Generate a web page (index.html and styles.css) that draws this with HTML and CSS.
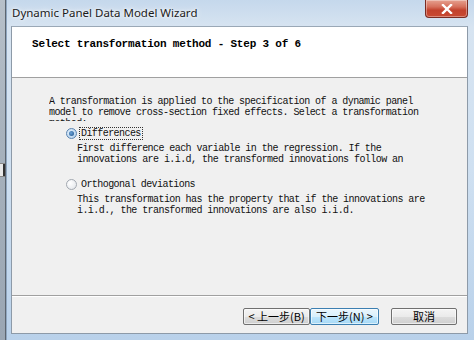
FILE: index.html
```html
<!DOCTYPE html>
<html>
<head>
<meta charset="utf-8">
<link rel="stylesheet" href="styles.css">
</head>
<body>
<div class="screen">
  <div class="behind">
    <div class="behind-frag"></div>
  </div>
  <div class="window">
    <div class="titlebar">
      <span class="title">Dynamic Panel Data Model Wizard</span>
      <div class="close">
        <svg width="12" height="10" viewBox="0 0 12 10"><path d="M2 1 L10 9 M10 1 L2 9" stroke="#fff" stroke-width="2.4" stroke-linecap="square"/></svg>
      </div>
    </div>
    <div class="client">
      <div class="header">Select transformation method - Step 3 of 6</div>
      <div class="content">
        <p class="intro">A transformation is applied to the specification of a dynamic panel<br>model to remove cross-section fixed effects. Select a transformation<br>method:</p>
        <div class="option">
          <div class="radio-row">
            <span class="radio checked"><span class="dot"></span></span>
            <span class="label focused">Differences</span>
          </div>
          <p class="desc">First difference each variable in the regression. If the<br>innovations are i.i.d, the transformed innovations follow an</p>
        </div>
        <div class="option second">
          <div class="radio-row">
            <span class="radio"></span>
            <span class="label">Orthogonal deviations</span>
          </div>
          <p class="desc">This transformation has the property that if the innovations are<br>i.i.d., the transformed innovations are also i.i.d.</p>
        </div>
      </div>
      <div class="footer">
        <div class="btn">&lt; 上一步(B)</div>
        <div class="btn default">下一步(N) &gt;</div>
        <div class="btn cancel">取消</div>
      </div>
    </div>
  </div>
</div>
</body>
</html>
```
FILE: styles.css
```css
html, body {
  margin: 0;
  padding: 0;
  width: 474px;
  height: 340px;
  overflow: hidden;
  background: #c9d3dd;
}
.screen {
  display: flex;
  width: 474px;
  height: 340px;
}
.behind {
  width: 5px;
  background: linear-gradient(#b7c0c9, #a7b2bd 40%, #9aa6b3);
  border-right: 1px solid #5d6670;
  display: flex;
  flex-direction: column;
  justify-content: center;
  overflow: hidden;
}
.behind-frag {
  height: 12px;
  background: #e8e8e8;
  border-top: 1px solid #888;
  border-bottom: 1px solid #888;
  box-shadow: inset -2px 0 0 #333;
}
.window {
  flex: 1;
  display: flex;
  flex-direction: column;
  padding: 0 6px 6px 5px;
  background: linear-gradient(180deg, #c5d8ec 0%, #d7e4f1 8%, #cfe0f1 50%, #b9d1ea 100%);
  box-shadow: inset 1px 0 0 #8fa6bf;
}
.titlebar {
  height: 26px;
  display: flex;
  align-items: flex-start;
  justify-content: space-between;
}
.title {
  font: 11.5px "Noto Sans", "Open Sans", sans-serif;
  color: #1b1b1b;
  margin: 5px 0 0 1px;
  text-shadow: 0 0 6px #fff, 0 0 3px #fff;
}
.close {
  width: 43px;
  height: 18px;
  box-sizing: border-box;
  border: 1px solid #7a2b22;
  border-top: none;
  border-radius: 0 0 4px 4px;
  background: linear-gradient(#e6a190 0%, #d6705c 40%, #c2412c 60%, #c94a32 100%);
  display: flex;
  align-items: center;
  justify-content: center;
  box-shadow: inset 0 0 0 1px rgba(255,255,255,0.35);
}
.client {
  flex: 1;
  display: flex;
  flex-direction: column;
  background: #f0f0f0;
  border: 1px solid #8d9aa8;
  border-top-color: #9aa8b6;
}
.header {
  height: 51px;
  background: #fff;
  border-bottom: 1px solid #a0a0a0;
  box-sizing: border-box;
  padding: 10px 0 0 20px;
  font: bold 11px/14px "Liberation Mono", monospace;
  letter-spacing: -0.2px;
  color: #000;
}
.content {
  flex: 1;
  padding-left: 37px;
  font: 10px/11px "Liberation Mono", monospace;
  letter-spacing: -0.57px;
  color: #111;
}
.intro {
  margin: 18px 0 0 0;
  height: 25px;
  overflow: hidden;
}
.option {
  margin: 6px 0 0 17px;
}
.option.second {
  margin-top: 13px;
}
.radio-row {
  display: flex;
  align-items: center;
  height: 13px;
}
.radio {
  width: 11px;
  height: 11px;
  box-sizing: border-box;
  border-radius: 50%;
  border: 1px solid #a2a8b0;
  background: radial-gradient(circle at 35% 35%, #fff, #dfe3e8);
  display: flex;
  align-items: center;
  justify-content: center;
}
.radio.checked {
  border-color: #5b84b0;
  background: radial-gradient(circle at 40% 40%, #e8f3fd, #a9cbea);
}
.dot {
  width: 5px;
  height: 5px;
  border-radius: 50%;
  background: radial-gradient(circle at 40% 40%, #6aa3d8, #1d4f86);
}
.label {
  margin-left: 2px;
  padding: 0 1px;
  border: 1px dotted transparent;
  line-height: 11px;
}
.label.focused {
  border-color: #333;
}
.desc {
  margin: 3px 0 0 11px;
}
.footer {
  height: 38px;
  border-top: 1px solid #a0a0a0;
  box-shadow: inset 0 1px 0 #fff;
  display: flex;
  align-items: flex-start;
  justify-content: flex-end;
  padding: 12px 10px 0 0;
  box-sizing: border-box;
}
.btn {
  height: 17px;
  box-sizing: border-box;
  border: 1px solid #707070;
  border-radius: 2px;
  background: linear-gradient(#f4f4f4 0%, #ebebeb 50%, #dddddd 51%, #cfcfcf 100%);
  font: 11px/15px "Noto Sans CJK SC", sans-serif;
  color: #000;
  display: flex;
  align-items: center;
  justify-content: center;
  width: 67px;
  box-shadow: inset 0 0 0 1px rgba(255,255,255,0.6);
}
.btn.default {
  width: 69px;
  border-color: #3c7fb1;
  background: linear-gradient(#eaf6fd 0%, #d9f0fc 50%, #bee6fd 51%, #a7d9f5 100%);
}
.btn.cancel {
  width: 66px;
  margin-left: 12px;
}
```
